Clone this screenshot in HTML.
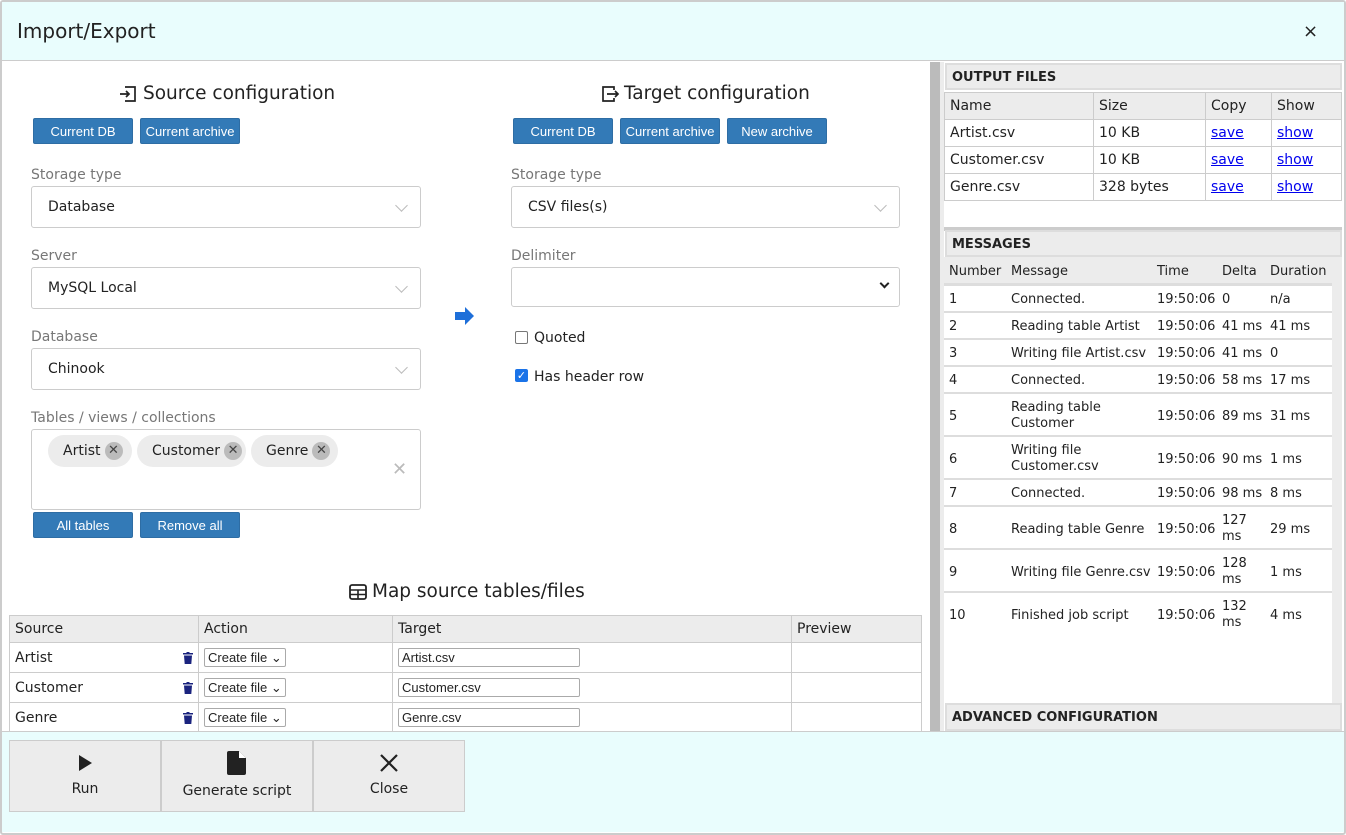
<!DOCTYPE html>
<html><head><meta charset="utf-8"><style>
*{box-sizing:border-box;margin:0;padding:0}
body{width:1346px;height:835px;background:#fff;font-family:"DejaVu Sans","Liberation Sans",sans-serif;font-size:13.5px;color:#222;position:relative;overflow:hidden}
.a{position:absolute}
.frame{left:0;top:0;width:1346px;height:835px;border:2px solid #ccc;border-radius:3px}
.hdr{left:2px;top:2px;width:1342px;height:59px;background:#e9fdfd;border-bottom:1px solid #ccc}
.btn{position:absolute;height:26px;background:#337ab7;border:1px solid #2e6da4;border-radius:2px;color:#fff;font-family:"Liberation Sans",sans-serif;font-size:13px;text-align:center;line-height:25px}
.lbl{position:absolute;color:#777;font-size:14px}
.sel{position:absolute;height:42px;border:1px solid #ccc;border-radius:3px;background:#fff;padding-left:16px;line-height:40px;font-size:14px}
.chev{position:absolute;right:14px;top:14px;width:9px;height:9px;border-right:1.5px solid #bbb;border-bottom:1.5px solid #bbb;transform:rotate(45deg)}
h2{position:absolute;font-weight:normal;font-size:18.5px;color:#222}
.tag{position:absolute;top:435px;height:32px;background:#ececec;border-radius:16px;line-height:32px;padding-left:15px;font-size:14px}
.tx{display:inline-block;width:18px;height:18px;border-radius:9px;background:#bbb;color:#444;text-align:center;line-height:18px;font-size:13px;margin-left:4px;vertical-align:1px}
.tb{position:absolute;border-collapse:collapse;font-size:14px}
.tb td{border:1px solid #ccc;padding:0 5px;vertical-align:middle}
.tb tr.h td{background:#ececec}
a{color:#00e;text-decoration:underline}
.sec{position:absolute;left:945px;width:397px;height:27px;background:#ececec;border:2px solid #ddd;font-weight:bold;font-size:13px;line-height:25px;padding-left:5px;color:#222}
.mr{position:absolute;left:944px;width:388px;border-bottom:2px solid #ddd;background:#fff;font-size:13px}
.mr span{position:absolute;line-height:16px;white-space:nowrap}
.ctl{font-family:"Liberation Sans",sans-serif;font-size:13px;border:1px solid #aaa;border-radius:2px;height:19px;line-height:17px;padding-left:3px;background:#fff;display:inline-block}
.fb{position:absolute;top:740px;width:152px;height:72px;background:#ececec;border:1px solid #ccc;text-align:center;font-size:14px}
.trash{float:right;margin-top:2px}
</style></head><body>
<div class="a frame"></div>
<div class="a hdr"></div>
<div class="a" style="left:17px;top:19px;font-size:20px;color:#222">Import/Export</div>
<div class="a" style="left:1303px;top:21px;font-size:18px">×</div>

<div class="a" style="left:930px;top:62px;width:10px;height:669px;background:#bbb"></div>
<div class="a" style="left:940px;top:62px;width:4px;height:669px;background:#ececec"></div>

<svg class="a" style="left:119px;top:86px" width="18" height="16" viewBox="0 0 18 16"><path d="M6 1h10v14H6M1 8h9M7 5l3 3-3 3" fill="none" stroke="#222" stroke-width="1.7"/></svg>
<h2 style="left:143px;top:83px">Source configuration</h2>
<div class="btn" style="left:33px;top:118px;width:100px">Current DB</div>
<div class="btn" style="left:140px;top:118px;width:100px">Current archive</div>
<div class="lbl" style="left:31px;top:167px">Storage type</div>
<div class="sel" style="left:31px;top:186px;width:390px">Database<i class="chev"></i></div>
<div class="lbl" style="left:31px;top:248px">Server</div>
<div class="sel" style="left:31px;top:267px;width:390px">MySQL Local<i class="chev"></i></div>
<div class="lbl" style="left:31px;top:329px">Database</div>
<div class="sel" style="left:31px;top:348px;width:390px">Chinook<i class="chev"></i></div>
<div class="lbl" style="left:31px;top:410px">Tables / views / collections</div>
<div class="a" style="left:31px;top:429px;width:390px;height:81px;border:1px solid #ccc;border-radius:3px"></div>
<div class="tag" style="left:48px;width:84px">Artist<span class="tx">✕</span></div>
<div class="tag" style="left:137px;width:109px">Customer<span class="tx">✕</span></div>
<div class="tag" style="left:251px;width:87px">Genre<span class="tx">✕</span></div>
<div class="a" style="left:392px;top:459px;color:#bbb;font-size:18px">✕</div>
<div class="btn" style="left:33px;top:512px;width:100px">All tables</div>
<div class="btn" style="left:140px;top:512px;width:100px">Remove all</div>

<svg class="a" style="left:455px;top:306px" width="20" height="20" viewBox="0 0 20 20"><path d="M0 6h10V1l9 9-9 9v-5H0z" fill="#1e6fd9"/></svg>

<svg class="a" style="left:602px;top:86px" width="18" height="16" viewBox="0 0 18 16"><path d="M12 4V1H1v14h11v-3M5 8h11M13 5l3 3-3 3" fill="none" stroke="#222" stroke-width="1.7"/></svg>
<h2 style="left:624px;top:83px">Target configuration</h2>
<div class="btn" style="left:513px;top:118px;width:100px">Current DB</div>
<div class="btn" style="left:620px;top:118px;width:100px">Current archive</div>
<div class="btn" style="left:727px;top:118px;width:100px">New archive</div>
<div class="lbl" style="left:511px;top:167px">Storage type</div>
<div class="sel" style="left:511px;top:186px;width:389px">CSV files(s)<i class="chev"></i></div>
<div class="lbl" style="left:511px;top:248px">Delimiter</div>
<div class="sel" style="left:511px;top:267px;width:389px;height:40px"><i class="chev" style="border-color:#222;right:11px;top:12px;width:7px;height:7px;border-width:2px"></i></div>
<div class="a" style="left:515px;top:331px;width:13px;height:13px;border:1px solid #777;border-radius:2px"></div>
<div class="a" style="left:534px;top:330px;font-size:14px">Quoted</div>
<div class="a" style="left:515px;top:369px;width:13px;height:13px;background:#1a73e8;border-radius:2px;color:#fff;font-size:11px;line-height:13px;text-align:center">✓</div>
<div class="a" style="left:534px;top:369px;font-size:14px">Has header row</div>

<svg class="a" style="left:349px;top:584px" width="18" height="16" viewBox="0 0 18 16"><rect x="1" y="1" width="16" height="14" rx="2" fill="none" stroke="#222" stroke-width="1.8"/><path d="M1 6h16M1 10.5h16M9 6v9" stroke="#222" stroke-width="1.6"/></svg>
<h2 style="left:372px;top:581px">Map source tables/files</h2>
<table class="tb" style="left:9px;top:615px;width:913px">
<tr class="h" style="height:27px"><td style="width:189px">Source</td><td style="width:194px">Action</td><td style="width:399px">Target</td><td>Preview</td></tr>
<tr style="height:30px"><td>Artist<svg class="trash" width="10" height="12" viewBox="0 0 10 12"><path d="M0 1h3.5V0h3v1H10v1.5H0zM1 3.5h8L8.3 12H1.7z" fill="#1a237e"/></svg></td><td><span class="ctl" style="width:82px">Create file ⌄</span></td><td><span class="ctl" style="width:182px">Artist.csv</span></td><td></td></tr>
<tr style="height:30px"><td>Customer<svg class="trash" width="10" height="12" viewBox="0 0 10 12"><path d="M0 1h3.5V0h3v1H10v1.5H0zM1 3.5h8L8.3 12H1.7z" fill="#1a237e"/></svg></td><td><span class="ctl" style="width:82px">Create file ⌄</span></td><td><span class="ctl" style="width:182px">Customer.csv</span></td><td></td></tr>
<tr style="height:30px"><td>Genre<svg class="trash" width="10" height="12" viewBox="0 0 10 12"><path d="M0 1h3.5V0h3v1H10v1.5H0zM1 3.5h8L8.3 12H1.7z" fill="#1a237e"/></svg></td><td><span class="ctl" style="width:82px">Create file ⌄</span></td><td><span class="ctl" style="width:182px">Genre.csv</span></td><td></td></tr>
</table>

<div class="sec" style="top:63px">OUTPUT FILES</div>
<div class="a" style="left:944px;top:90px;width:398px;height:137px;background:#fff"></div>
<table class="tb" style="left:944px;top:92px;width:398px">
<tr class="h" style="height:27px"><td style="width:149px">Name</td><td style="width:112px">Size</td><td style="width:66px">Copy</td><td>Show</td></tr>
<tr style="height:27px"><td>Artist.csv</td><td>10 KB</td><td><a>save</a></td><td><a>show</a></td></tr>
<tr style="height:27px"><td>Customer.csv</td><td>10 KB</td><td><a>save</a></td><td><a>show</a></td></tr>
<tr style="height:27px"><td>Genre.csv</td><td>328 bytes</td><td><a>save</a></td><td><a>show</a></td></tr>
</table>
<div class="a" style="left:944px;top:227px;width:398px;height:4px;background:#ccc"></div>
<div class="sec" style="top:230px">MESSAGES</div>
<div class="a" style="left:944px;top:257px;width:388px;height:446px;background:#fff"></div>
<div class="a" style="left:1332px;top:257px;width:10px;height:446px;background:#ececec"></div>
<div class="mr" style="top:257px;height:29px;background:#ececec;border-bottom:3px solid #ddd"><span style="left:5px;top:7px">Number</span><span style="left:67px;top:7px">Message</span><span style="left:213px;top:7px">Time</span><span style="left:278px;top:7px">Delta</span><span style="left:326px;top:7px">Duration</span></div>
<div class="mr" style="top:286px;height:27px"><span style="left:5px;top:6px">1</span><span style="left:67px;top:6px">Connected.</span><span style="left:213px;top:6px">19:50:06</span><span style="left:278px;top:6px">0</span><span style="left:326px;top:6px">n/a</span></div>
<div class="mr" style="top:313px;height:27px"><span style="left:5px;top:6px">2</span><span style="left:67px;top:6px">Reading table Artist</span><span style="left:213px;top:6px">19:50:06</span><span style="left:278px;top:6px">41 ms</span><span style="left:326px;top:6px">41 ms</span></div>
<div class="mr" style="top:340px;height:27px"><span style="left:5px;top:6px">3</span><span style="left:67px;top:6px">Writing file Artist.csv</span><span style="left:213px;top:6px">19:50:06</span><span style="left:278px;top:6px">41 ms</span><span style="left:326px;top:6px">0</span></div>
<div class="mr" style="top:367px;height:27px"><span style="left:5px;top:6px">4</span><span style="left:67px;top:6px">Connected.</span><span style="left:213px;top:6px">19:50:06</span><span style="left:278px;top:6px">58 ms</span><span style="left:326px;top:6px">17 ms</span></div>
<div class="mr" style="top:394px;height:43px"><span style="left:5px;top:15px">5</span><span style="left:67px;top:6px">Reading table<br>Customer</span><span style="left:213px;top:15px">19:50:06</span><span style="left:278px;top:15px">89 ms</span><span style="left:326px;top:15px">31 ms</span></div>
<div class="mr" style="top:437px;height:43px"><span style="left:5px;top:15px">6</span><span style="left:67px;top:6px">Writing file<br>Customer.csv</span><span style="left:213px;top:15px">19:50:06</span><span style="left:278px;top:15px">90 ms</span><span style="left:326px;top:15px">1 ms</span></div>
<div class="mr" style="top:480px;height:27px"><span style="left:5px;top:6px">7</span><span style="left:67px;top:6px">Connected.</span><span style="left:213px;top:6px">19:50:06</span><span style="left:278px;top:6px">98 ms</span><span style="left:326px;top:6px">8 ms</span></div>
<div class="mr" style="top:507px;height:43px"><span style="left:5px;top:15px">8</span><span style="left:67px;top:15px">Reading table Genre</span><span style="left:213px;top:15px">19:50:06</span><span style="left:278px;top:6px">127<br>ms</span><span style="left:326px;top:15px">29 ms</span></div>
<div class="mr" style="top:550px;height:43px"><span style="left:5px;top:15px">9</span><span style="left:67px;top:15px">Writing file Genre.csv</span><span style="left:213px;top:15px">19:50:06</span><span style="left:278px;top:6px">128<br>ms</span><span style="left:326px;top:15px">1 ms</span></div>
<div class="mr" style="top:593px;height:43px;border:none"><span style="left:5px;top:15px">10</span><span style="left:67px;top:15px">Finished job script</span><span style="left:213px;top:15px">19:50:06</span><span style="left:278px;top:6px">132<br>ms</span><span style="left:326px;top:15px">4 ms</span></div>
<div class="sec" style="top:703px;height:28px">ADVANCED CONFIGURATION</div>

<div class="a" style="left:2px;top:731px;width:1342px;height:101px;background:#e9fdfd;border-top:1px solid #ccc"></div>
<div class="fb" style="left:9px"><svg style="margin-top:13px" width="16" height="18" viewBox="0 0 16 18"><path d="M2 1l13 8-13 8z" fill="#222"/></svg><div style="margin-top:5px">Run</div></div>
<div class="fb" style="left:161px"><svg style="margin-top:10px" width="20" height="24" viewBox="0 0 20 24"><path d="M2 0h10l7 7v15a2 2 0 0 1-2 2H2a2 2 0 0 1-2-2V2a2 2 0 0 1 2-2z" fill="#222"/><path d="M12 0v7h7" fill="#fff"/></svg><div style="margin-top:4px">Generate script</div></div>
<div class="fb" style="left:313px"><svg style="margin-top:13px" width="18" height="18" viewBox="0 0 18 18"><path d="M1 1l16 16M17 1L1 17" stroke="#222" stroke-width="2.2"/></svg><div style="margin-top:5px">Close</div></div>
</body></html>
